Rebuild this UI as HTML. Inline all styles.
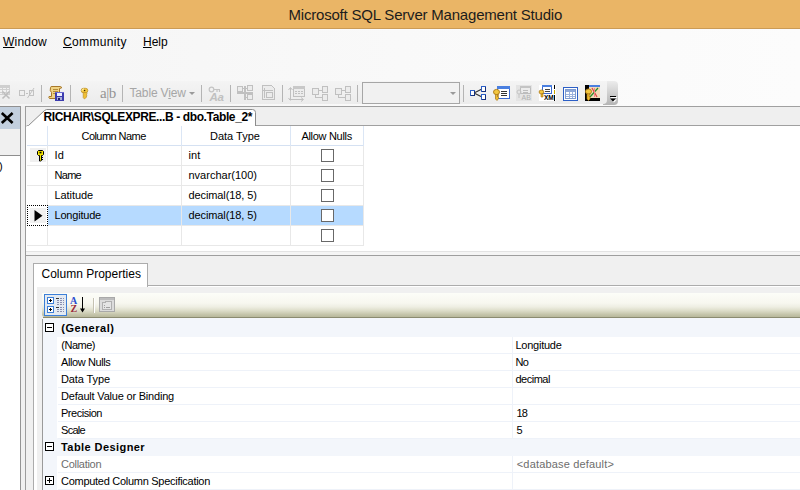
<!DOCTYPE html>
<html><head><meta charset="utf-8">
<style>
*{margin:0;padding:0;box-sizing:border-box}
html,body{width:800px;height:490px;overflow:hidden;background:#f0f0f0}
body{position:relative;font-family:"Liberation Sans",sans-serif;color:#000}
.a{position:absolute}
.t{position:absolute;white-space:nowrap;line-height:1}
.sep{position:absolute;width:1px;top:85px;height:17px;background:#b4b4b4}
.g{font-size:11px}
.cb{position:absolute;width:13px;height:13px;border:1px solid #686868;background:#fff}
.row{position:absolute;left:43px;right:0;height:17px}
</style></head><body>
<!-- title bar -->
<div class="a" id="title" style="left:0;top:0;width:800px;height:29px;background:#eab566;border-bottom:1px solid #cb9b56"></div>
<div class="t" id="ttl" style="left:288.5px;top:6.5px;font-size:15px;letter-spacing:-.2px;color:#1c1c1c">Microsoft SQL Server Management Studio</div>
<!-- menu -->
<div class="a" style="left:0;top:29px;width:800px;height:77px;background:linear-gradient(90deg,#f5f5f5,#f9f9f9 50%,#fcfcfc);border-top:1px solid #fbfbfd"></div>
<div class="t" id="m1" style="letter-spacing:.2px;left:3px;top:36.400px;font-size:12px"><u>W</u>indow</div>
<div class="t" id="m2" style="letter-spacing:.35px;left:63px;top:36.400px;font-size:12px"><u>C</u>ommunity</div>
<div class="t" id="m3" style="left:143px;top:36.400px;font-size:12px"><u>H</u>elp</div>
<!-- toolbar -->
<div class="a" style="left:603px;top:81px;width:15px;height:24px;background:linear-gradient(#ececec,#d0d0d0 50%,#b4b4b4);border-radius:0 4px 4px 0"></div>
<div class="a" id="tb" style="left:0;top:81px;width:607px;height:23px;background:linear-gradient(#f4f4f4,#ececec);border-radius:0 0 4px 0"></div>
<div class="a" style="left:25px;top:106px;width:775px;height:1px;background:#a0a0a0"></div>
<div class="sep" style="left:41px"></div>
<div class="sep" style="left:70px"></div>
<div class="sep" style="left:122px"></div>
<div class="sep" style="left:201px"></div>
<div class="sep" style="left:230px"></div>
<div class="sep" style="left:282px"></div>
<div class="sep" style="left:357px"></div>
<div class="sep" style="left:463px"></div>
<div class="t" id="tv" style="letter-spacing:-.15px;left:129.500px;top:87.300px;font-size:12px;color:#a6a6a6">Table V<u>i</u>ew</div>
<div class="a" style="left:188.500px;top:92px;border:3px solid transparent;border-top:3px solid #9a9a9a;border-bottom:0"></div>
<div class="a" style="left:362px;top:82px;width:98px;height:22px;border:1px solid #a6a6a6;background:#f1f1f1"></div>
<div class="a" style="left:450px;top:92px;border:3px solid transparent;border-top:3px solid #9a9a9a;border-bottom:0"></div>
<!-- left panel -->
<div class="a" style="left:0;top:106px;width:21px;height:23px;background:#c2cfde;border-top:1px solid #909090"></div>
<div class="a" style="left:0;top:129px;width:20px;height:26px;background:#f0f0f0"></div>
<div class="a" style="left:0;top:155px;width:20px;height:1px;background:#8e8e8e"></div>
<div class="a" style="left:0;top:156px;width:20px;height:334px;background:#fff"></div>
<div class="a" style="left:20px;top:106px;width:1px;height:384px;background:#949494"></div>
<div class="a" style="left:25px;top:106px;width:1px;height:384px;background:#9c9c9c"></div>
<div class="t g" style="left:-1px;top:161px">)</div>
<svg class="a" style="left:0;top:0" width="800" height="130" viewBox="0 0 800 130">
<g shape-rendering="crispEdges">
<!-- icon1 disabled table with X -->
<g fill="none" stroke="#d0d0d0">
<rect x="-2.5" y="85.5" width="12" height="9"/>
<path d="M-2 89.5H9M-2 92.5H9M2.5 88V94M6.5 88V94"/>
</g>
<rect x="-2" y="85" width="12" height="3" fill="#cfcfcf"/>
</g>
<path d="M2.5 91.5L9.5 98.5M9.5 91.5L2.5 98.5" stroke="#bdbdbd" stroke-width="1.6" fill="none"/>
<!-- icon2 -->
<g fill="none" stroke="#c2c2c2" shape-rendering="crispEdges">
<rect x="19.5" y="90.5" width="5" height="5"/>
<rect x="29.5" y="90.5" width="4" height="5"/>
<path d="M26 93.5H28"/>
</g>
<path d="M27.5 98L34 88" stroke="#c2c2c2" stroke-width="1" fill="none"/>
<!-- script + floppy -->
<path d="M50.5 87.5 Q50.5 86.5 52 86.5 H60.5 Q61.5 86.5 61.5 88 L59.5 88.5 V96.5 Q59.5 98.5 57.5 98.5 H49.5 Q48.5 98 49 96.5 H51.5 V92.5 Q49.5 91 50.5 87.5Z" fill="#f0d383" stroke="#a8782a" stroke-width="1"/>
<path d="M53 89.5H58M53 91.5H58M53 93.5H56" stroke="#b48a3a" stroke-width="1" shape-rendering="crispEdges"/>
<g shape-rendering="crispEdges">
<rect x="55" y="92" width="9" height="9" fill="#3c3cae"/>
<rect x="55" y="92" width="9" height="1" fill="#6a6ad0"/>
<rect x="57" y="93" width="5" height="3" fill="#eef0ff"/>
<rect x="57" y="97" width="5" height="3" fill="#a8aed8"/>
<rect x="58" y="98" width="2" height="2" fill="#20206a"/>
</g>
<!-- key -->
<g>
<rect x="81.200" y="88.300" width="6.600" height="4.500" rx="2.200" fill="#f2c63c" stroke="#b88a22" stroke-width=".7"/>
<path d="M82 90.800Q82 89 84 88.900" stroke="#fff3b8" stroke-width="1" fill="none"/>
<path d="M83.200 92.500H86.300L87.200 93.500L86.200 94.300L87.200 95.200L86.200 96L86.800 96.900L84.400 99L83.200 97.600Z" fill="#efbf34" stroke="#b88a22" stroke-width=".6"/>
<circle cx="84.600" cy="90.400" r=".75" fill="#3a2a00"/>
</g>
<!-- key Aa (disabled) -->
<g fill="none" stroke="#c4c4c4" stroke-width="1.2">
<circle cx="211.5" cy="89.5" r="2.3"/>
<path d="M214 89.5H220M217 90V92M219.5 90V92"/>
</g>
<!-- relationships icon (disabled) -->
<g shape-rendering="crispEdges" fill="#ececec" stroke="#c0c0c0">
<rect x="237.5" y="86.5" width="5" height="5"/>
<rect x="247.5" y="85.5" width="5" height="5"/>
<rect x="247.5" y="94.5" width="5" height="5"/>
<path d="M237 93.5H253M245.500 86V100M243 88.500H247M245 97.500H247" fill="none"/>
<path d="M237 93H253M245 86V100" fill="none" stroke-width="2"/>
</g>
<!-- page icon (disabled) -->
<g shape-rendering="crispEdges" fill="#ececec" stroke="#c0c0c0">
<path d="M262.500 85.500H271.500L274.500 88.500V99.500H262.500Z"/>
<path d="M264.500 88V98M263 90.500H273" fill="none"/>
<rect x="266.500" y="92.500" width="6" height="5"/>
</g>
<!-- table w/ arrows (disabled) -->
<g shape-rendering="crispEdges" fill="#ececec" stroke="#c0c0c0">
<rect x="293.500" y="86.500" width="11" height="10"/>
<rect x="293" y="86" width="12" height="3" fill="#c8c8c8" stroke="none"/>
<path d="M295 91.500H303M295 93.500H303" fill="none" stroke-dasharray="2 1"/>
<path d="M290.500 88V100M289 99.500H303" fill="none"/>
</g>
<path d="M288.500 90L290.500 87.500L292.500 90M288.500 98L290.500 100.500M301 97.500L303.500 99.500L301 101.500" fill="none" stroke="#c0c0c0"/>
<!-- tree icons (disabled) -->
<g shape-rendering="crispEdges" fill="#ececec" stroke="#c0c0c0">
<rect x="312.500" y="88.500" width="6" height="6"/>
<rect x="322.500" y="86.500" width="5" height="6"/>
<rect x="322.500" y="94.500" width="5" height="6"/>
<path d="M319 90.500H322M315.500 95V97.500H322" fill="none"/>
<rect x="335.500" y="88.500" width="6" height="6"/>
<rect x="345.500" y="86.500" width="5" height="6"/>
<rect x="345.500" y="94.500" width="5" height="6"/>
<path d="M342 90.500H345M338.500 95V97.500H345" fill="none"/>
</g>
<!-- blue nodes -->
<path d="M475 92.500L482 89M475 93.500L482 97" stroke="#333" stroke-width="1.2" fill="none"/>
<g shape-rendering="crispEdges" fill="#fff" stroke="#2c5fc6">
<rect x="470.500" y="90.500" width="4" height="5"/>
<rect x="481.500" y="86.500" width="4" height="5"/>
<rect x="481.500" y="94.500" width="4" height="5"/>
<path d="M471 95.500H475M474.500 91V96M482 91.500H486M485.500 87V92M482 99.500H486M485.500 95V100" stroke="#16307a" fill="none"/>
</g>
<!-- key + list window -->
<g shape-rendering="crispEdges">
<rect x="497.500" y="86.500" width="12" height="12" fill="#fff" stroke="#3a6ad0"/>
<rect x="497" y="86" width="13" height="3" fill="#4a7fe0"/>
<path d="M501 91.500H507M501 93.500H507M501 95.500H507" stroke="#333"/>
</g>
<ellipse cx="496.500" cy="92" rx="3" ry="2.600" fill="#f3c73f" stroke="#a87413" stroke-width=".9"/>
<path d="M495.500 94.500H498.500V95.500H497.500V96.500H498.500V98.500L497 100.500L495.500 99Z" fill="#eebc30" stroke="#a87413" stroke-width=".7"/>
<!-- disabled AB -->
<g shape-rendering="crispEdges">
<rect x="516" y="85" width="16" height="16" fill="#e4e4e4"/>
<rect x="520.500" y="86.500" width="10" height="7" fill="#ececec" stroke="#bdbdbd"/>
<rect x="520" y="86" width="11" height="2" fill="#c4c4c4"/>
<path d="M523 90.500H528M523 92.500H528" stroke="#bdbdbd"/>
</g>
<circle cx="519" cy="92" r="2" fill="none" stroke="#c4c4c4"/>
<path d="M519 94V98" stroke="#c4c4c4"/>
<!-- xml icon -->
<g shape-rendering="crispEdges">
<rect x="539" y="85" width="17" height="16" fill="#fff"/>
<rect x="542.500" y="85.500" width="9" height="8" fill="#fff" stroke="#3a6ad0"/>
<rect x="542" y="85" width="10" height="2" fill="#4a7fe0"/>
<path d="M545 89.500H550M545 91.500H550" stroke="#444"/>
<path d="M554.500 85V89M554.500 95V101" stroke="#000" stroke-width="1"/>
<path d="M554.500 90V94" stroke="#c8a800"/>
</g>
<ellipse cx="541.500" cy="92" rx="2.400" ry="2" fill="#f3c73f" stroke="#a87413" stroke-width=".8"/>
<path d="M541 94H543V97H541Z" fill="#eebc30" stroke="#a87413" stroke-width=".6"/>
<!-- blue table -->
<g shape-rendering="crispEdges">
<rect x="563.500" y="87.500" width="14" height="13" fill="#fff" stroke="#2c5fc6"/>
<rect x="565.500" y="89.500" width="10" height="9" fill="#fff" stroke="#7f9cd0"/>
<rect x="566" y="90" width="9" height="2" fill="#8fa8d8"/>
<path d="M566 94.500H575M566 96.500H575M569.500 92V98M572.500 92V98" stroke="#9db3dd" fill="none"/>
</g>
<!-- key chart on black -->
<g shape-rendering="crispEdges">
<rect x="585" y="85" width="15" height="16" fill="#000"/>
<rect x="589" y="87" width="11" height="11" fill="#f3d9b8"/>
<rect x="589" y="85" width="11" height="2" fill="#4a7fe0"/>
</g>
<path d="M590 97L598 88" stroke="#2a8a2a" stroke-width="1.2"/>
<path d="M592 88L597 97" stroke="#e04040" stroke-width="1.2"/>
<path d="M594.500 88V97" stroke="#e88" stroke-width="1"/>
<ellipse cx="588.500" cy="91.500" rx="3" ry="2.600" fill="#f3c73f" stroke="#a87413" stroke-width=".9"/>
<path d="M587 94H590V95H589V96.500H590V99L588.500 100.500L587 99Z" fill="#eebc30" stroke="#a87413" stroke-width=".7"/>
<!-- end-cap arrow -->
<g shape-rendering="crispEdges">
<rect x="611" y="97" width="6" height="1" fill="#fff"/>
<rect x="610" y="96" width="6" height="1" fill="#000"/>
</g>
<path d="M611 99.500H617L614 102.500Z" fill="#fff"/>
<path d="M610 98.500H616L613 101.500Z" fill="#000"/>
<!-- left panel X -->
<path d="M1.800 113L12.600 123M12.600 113L1.800 123" stroke="#000" stroke-width="2.600" fill="none"/>
</svg>
<div class="t" style="left:100px;top:86px;font-family:'Liberation Serif',serif;font-size:15px;color:#949494;letter-spacing:-.4px">a|b</div>
<div class="t" style="left:209.500px;top:91.500px;font-size:11.500px;font-weight:bold;font-style:italic;color:#c0c0c0;letter-spacing:-.3px">Aa</div>
<div class="t" style="left:521.500px;top:94px;font-size:7px;color:#b0b0b0;letter-spacing:0">AB</div>
<div class="t" style="left:544px;top:95px;font-size:6.500px;font-weight:bold;color:#000;letter-spacing:0">XM</div>
<!-- doc area -->
<div class="a" style="left:26px;top:107px;width:774px;height:19px;background:#efefef"></div>
<div class="a" style="left:26px;top:126px;width:774px;height:125px;background:#fff"></div>
<div class="a" style="left:255px;top:125px;width:545px;height:1px;background:#a0a0a0"></div>

<!-- tab shape -->
<svg class="a" style="left:26px;top:107px" width="232" height="20" viewBox="0 0 232 20">
<path d="M0.5 19 L2.5 18.5 L18.5 3.5 L20.5 2.5 L226.5 2.5 Q229.5 2.5 229.5 5.5 L229.5 19" fill="#fff" stroke="#8c8c8c" stroke-width="1"/>
</svg>
<div class="t" id="tab" style="letter-spacing:-.38px;left:43.500px;top:110.500px;font-size:12px;font-weight:bold">RICHAIR\SQLEXPRE...B - dbo.Table_2*</div>
<!-- grid -->
<div class="a" style="left:27px;top:126px;width:337px;height:20px;background:#fff;border-bottom:1px solid #d5e1f2"></div>
<div class="a" style="left:47px;top:126px;width:1px;height:20px;background:#dbe6f5"></div>
<div class="a" style="left:181px;top:126px;width:1px;height:20px;background:#dbe6f5"></div>
<div class="a" style="left:290px;top:126px;width:1px;height:20px;background:#dbe6f5"></div>
<div class="a" style="left:363px;top:126px;width:1px;height:20px;background:#dbe6f5"></div>
<!-- row header col -->
<div class="a" style="left:30px;top:148px;width:16px;height:14px;background:#f0f0f0"></div>
<!-- selected row -->
<div class="a" style="left:48px;top:206px;width:315px;height:19px;background:#b6daff"></div>
<!-- row lines -->
<div class="a" style="left:27px;top:165px;width:337px;height:1px;background:#e8e8e8"></div>
<div class="a" style="left:27px;top:185px;width:337px;height:1px;background:#e8e8e8"></div>
<div class="a" style="left:27px;top:205px;width:337px;height:1px;background:#e8e8e8"></div>
<div class="a" style="left:27px;top:225px;width:337px;height:1px;background:#e8e8e8"></div>
<div class="a" style="left:27px;top:245px;width:337px;height:1px;background:#e8e8e8"></div>
<div class="a" style="left:47px;top:146px;width:1px;height:100px;background:#e8e8e8"></div>
<div class="a" style="left:181px;top:146px;width:1px;height:100px;background:#e8e8e8"></div>
<div class="a" style="left:290px;top:146px;width:1px;height:100px;background:#e8e8e8"></div>
<div class="a" style="left:363px;top:146px;width:1px;height:100px;background:#e8e8e8"></div>
<div class="t g" id="h1" style="letter-spacing:-0.55px;left:81.5px;top:130.800px">Column Name</div>
<div class="t g" id="h2" style="left:210px;top:130.800px">Data Type</div>
<div class="t g" id="h3" style="letter-spacing:-0.3px;left:301.4px;top:130.800px">Allow Nulls</div>
<div class="t g" id="c1" style="letter-spacing:0.25px;left:54.5px;top:150px">Id</div>
<div class="t g" id="c2" style="letter-spacing:-0.7px;left:54.5px;top:170px">Name</div>
<div class="t g" id="c3" style="letter-spacing:-0.08px;left:54.5px;top:190px">Latitude</div>
<div class="t g" id="c4" style="letter-spacing:-0.2px;left:54.5px;top:210px">Longitude</div>
<div class="t g" id="d1" style="letter-spacing:0.1px;left:188.5px;top:150px">int</div>
<div class="t g" id="d2" style="letter-spacing:0px;left:188.5px;top:170px">nvarchar(100)</div>
<div class="t g" id="d3" style="letter-spacing:-0.1px;left:188.5px;top:190px">decimal(18, 5)</div>
<div class="t g" id="d4" style="letter-spacing:-0.1px;left:188.5px;top:210px">decimal(18, 5)</div>
<div class="cb" style="left:321px;top:149px"></div>
<div class="cb" style="left:321px;top:169px"></div>
<div class="cb" style="left:321px;top:189px"></div>
<div class="cb" style="left:321px;top:209px"></div>
<div class="cb" style="left:321px;top:229px"></div>
<!-- current row indicator -->
<div class="a" style="left:27px;top:205px;width:21px;height:21px;border:1px dotted #000;background:#fff"></div>
<div class="a" style="left:30px;top:208px;width:16px;height:15px;background:#f0f0f0"></div>
<svg class="a" style="left:27px;top:146px" width="22" height="80" viewBox="27 146 22 80">
<path d="M34.500 210V221.500L42.500 215.700Z" fill="#000"/>
<!-- key -->
<path d="M38.500 150.500H42.500L43.500 151.500V154.500L42.500 155.500H41.500V160.500L40.500 161H39.500V155.500H38.500L37.500 154.500V151.500Z" fill="#f5e400" stroke="#000" stroke-width="1" stroke-linejoin="round"/>
<rect x="39.500" y="151.800" width="2" height="1.600" fill="#000"/>
<path d="M41.500 157.500H43M41.500 159.500H43" stroke="#000"/>
</svg>
<!-- splitter -->
<div class="a" style="left:26px;top:251px;width:774px;height:1px;background:#e3e3e3"></div>
<div class="a" style="left:26px;top:252px;width:774px;height:3px;background:#f5f5f5"></div>
<div class="a" style="left:26px;top:255px;width:774px;height:1px;background:#9e9e9e"></div>
<div class="a" style="left:26px;top:256px;width:774px;height:234px;background:#f0f0f0"></div>
<!-- tab page -->
<div class="a" style="left:33px;top:285px;width:767px;height:205px;background:#fff;border-left:1px solid #acacac;border-top:1px solid #acacac"></div>
<div class="a" style="left:33px;top:263px;width:115px;height:24px;background:#fff;border:1px solid #acacac;border-bottom:0"></div>
<div class="t" id="cp" style="left:41.500px;top:268px;font-size:12px">Column Properties</div>
<!-- propgrid toolbar -->
<div class="a" style="left:37px;top:287px;width:763px;height:203px;background:#f0f0f0"></div>
<div class="a" style="left:42px;top:293px;width:758px;height:24px;background:linear-gradient(#fcfdf8 0%,#f7f7ef 42%,#eeeee2 58%,#dcdcc8 74%,#c4c4a9 90%,#b8b89b 100%);border-radius:0 0 0 3px"></div>
<div class="a" style="left:43px;top:317px;width:757px;height:1px;background:#8b8b70"></div>
<div class="a" style="left:42px;top:318px;width:758px;height:1px;background:#f4f6fa"></div>
<div class="a" style="left:44px;top:294px;width:23px;height:22px;border:1px solid #3c7fd8;background:#e3eaf2"></div>
<div class="a" style="left:93px;top:298px;width:1px;height:15px;background:#c5c2b2"></div>
<div class="a" style="left:94px;top:298px;width:1px;height:15px;background:#fff"></div>
<svg class="a" style="left:40px;top:290px" width="90" height="30" viewBox="40 290 90 30">
<g shape-rendering="crispEdges">
<!-- categorized icon -->
<rect x="47.500" y="297.500" width="6" height="6" fill="#fff" stroke="#3c7fd8"/>
<rect x="47.500" y="306.500" width="6" height="6" fill="#fff" stroke="#3c7fd8"/>
<path d="M49 300.500H52M50.500 299V302M49 309.500H52M50.500 308V311" stroke="#000" fill="none"/>
<path d="M56 298.500H59M56 307.500H59" stroke="#333" fill="none"/>
<path d="M60 298.500H64M57 300.500H64M57 302.500H64M57 304.500H64M60 307.500H64M57 309.500H64M57 311.500H64" stroke="#8a8fb0" stroke-dasharray="2 1" fill="none"/>
<!-- arrow -->
<path d="M82.500 297V311" stroke="#000" fill="none"/>
<!-- prop pages icon -->
<rect x="99.500" y="297.500" width="15" height="14" fill="#dcdcdc" stroke="#a9a9a9"/>
<rect x="100" y="298" width="14" height="2" fill="#bcbcbc"/>
<path d="M102.500 309.500V302.500H105.500V301.500H111.500V309.500Z" fill="#e4e4e4" stroke="#b0b0b0"/>
<path d="M104 305.500H105M104 307.500H105M106 307.500H110" stroke="#a0a0a0" fill="none"/>
</g>
<path d="M80 308.500H85L82.500 312.500Z" fill="#000"/>
</svg>
<div class="t" style="left:70px;top:296px;font-family:'Liberation Serif',serif;font-size:10px;font-weight:bold;color:#2a4fd0">A</div>
<div class="t" style="left:70.500px;top:303.500px;font-family:'Liberation Serif',serif;font-size:10px;font-weight:bold;color:#9a2a3a">Z</div>
<!-- propgrid -->
<div class="a" style="left:42px;top:319px;width:758px;height:171px;background:#fff"></div>
<div class="a" style="left:42px;top:319px;width:1px;height:171px;background:#9a9a9a"></div>
<div class="a" style="left:43px;top:319px;width:14px;height:171px;background:#f3f6fb"></div>
<div class="a" style="left:43px;top:319px;width:757px;height:18px;background:#f3f6fb"></div>
<div class="a" style="left:43px;top:438px;width:757px;height:18px;background:#f3f6fb"></div>
<svg class="a" style="left:44px;top:320px" width="12" height="170" viewBox="44 320 12 170" shape-rendering="crispEdges">
<rect x="45.500" y="323.500" width="8" height="8" fill="#fff" stroke="#000"/>
<path d="M47 327.500H52" stroke="#000"/>
<rect x="45.500" y="442.500" width="8" height="8" fill="#fff" stroke="#000"/>
<path d="M47 446.500H52" stroke="#000"/>
<rect x="45.500" y="476.500" width="8" height="8" fill="#fff" stroke="#000"/>
<path d="M47 480.500H52M49.500 478V483" stroke="#000"/>
</svg>
<div class="t g" id="p0" style="letter-spacing:0.55px;left:61.3px;top:323px;font-weight:bold;font-size:11px">(General)</div>
<div class="t g" id="p1" style="letter-spacing:-0.5px;left:61.3px;top:340px">(Name)</div>
<div class="t g" id="v1" style="letter-spacing:-0.25px;left:515.5px;top:340px">Longitude</div>
<div class="a" style="left:58px;top:353px;width:742px;height:1px;background:#eef2f9"></div>
<div class="a" style="left:512px;top:337px;width:1px;height:17px;background:#eef2f9"></div>
<div class="t g" id="p2" style="letter-spacing:-0.4px;left:61px;top:357px">Allow Nulls</div>
<div class="t g" id="v2" style="letter-spacing:-0.8px;left:515.5px;top:357px">No</div>
<div class="a" style="left:58px;top:370px;width:742px;height:1px;background:#eef2f9"></div>
<div class="a" style="left:512px;top:354px;width:1px;height:17px;background:#eef2f9"></div>
<div class="t g" id="p3" style="letter-spacing:-0.1px;left:61px;top:374px">Data Type</div>
<div class="t g" id="v3" style="letter-spacing:-0.5px;left:515.5px;top:374px">decimal</div>
<div class="a" style="left:58px;top:387px;width:742px;height:1px;background:#eef2f9"></div>
<div class="a" style="left:512px;top:371px;width:1px;height:17px;background:#eef2f9"></div>
<div class="t g" id="p4" style="letter-spacing:-0.2px;left:61px;top:391px">Default Value or Binding</div>
<div class="a" style="left:58px;top:404px;width:742px;height:1px;background:#eef2f9"></div>
<div class="a" style="left:512px;top:388px;width:1px;height:17px;background:#eef2f9"></div>
<div class="t g" id="p5" style="letter-spacing:-0.47px;left:61px;top:408px">Precision</div>
<div class="t g" id="v5" style="letter-spacing:-0.8px;left:516.5px;top:408px">18</div>
<div class="a" style="left:58px;top:421px;width:742px;height:1px;background:#eef2f9"></div>
<div class="a" style="left:512px;top:405px;width:1px;height:17px;background:#eef2f9"></div>
<div class="t g" id="p6" style="letter-spacing:-0.7px;left:61px;top:425px">Scale</div>
<div class="t g" id="v6" style="letter-spacing:0px;left:516.5px;top:425px">5</div>
<div class="a" style="left:58px;top:438px;width:742px;height:1px;background:#eef2f9"></div>
<div class="a" style="left:512px;top:422px;width:1px;height:17px;background:#eef2f9"></div>
<div class="t g" id="p7" style="letter-spacing:0.43px;left:61px;top:442px;font-weight:bold;font-size:11px">Table Designer</div>
<div class="t g" id="p8" style="letter-spacing:-0.28px;left:61px;top:459px;color:#6d6d6d">Collation</div>
<div class="t g" id="v8" style="letter-spacing:0.17px;left:516.75px;top:459px;color:#6d6d6d">&lt;database default&gt;</div>
<div class="a" style="left:58px;top:472px;width:742px;height:1px;background:#eef2f9"></div>
<div class="a" style="left:512px;top:456px;width:1px;height:17px;background:#eef2f9"></div>
<div class="t g" id="p9" style="letter-spacing:-0.28px;left:61px;top:476px">Computed Column Specification</div>
<div class="a" style="left:58px;top:489px;width:742px;height:1px;background:#eef2f9"></div>
<div class="a" style="left:512px;top:473px;width:1px;height:17px;background:#eef2f9"></div>
</body></html>
